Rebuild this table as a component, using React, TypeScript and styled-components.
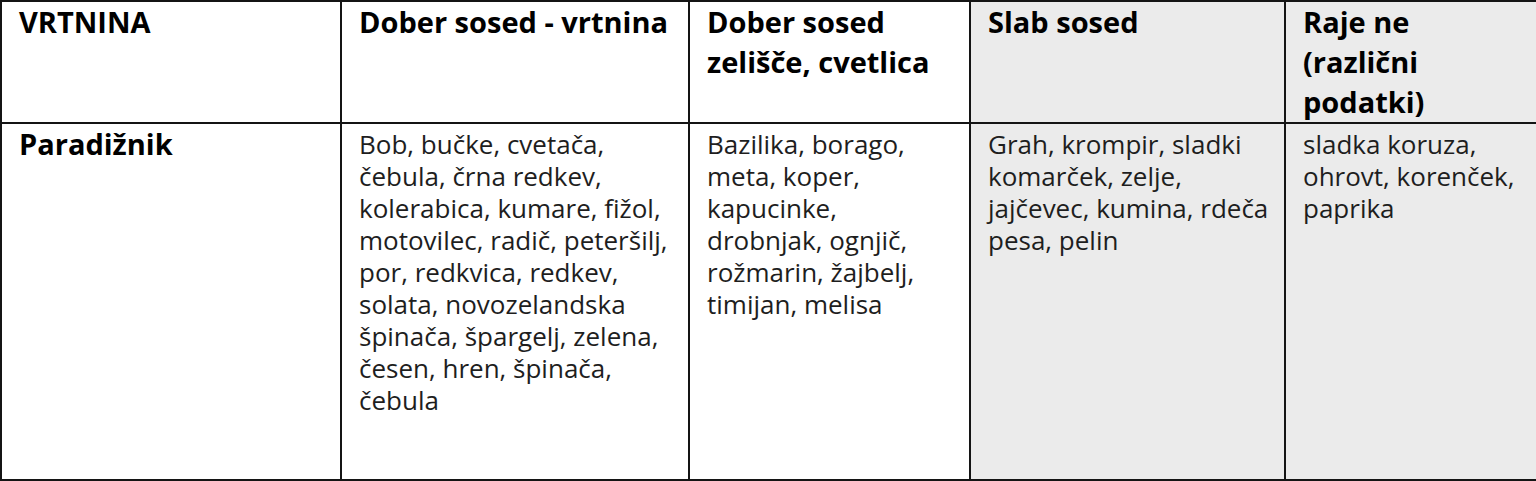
import React from 'react';
import styled, { createGlobalStyle } from 'styled-components';

const GlobalStyle = createGlobalStyle`
  html, body {
    margin: 0;
    padding: 0;
    background: #ffffff;
  }
  body {
    font-family: "Open Sans", "Liberation Sans", sans-serif;
  }
`;

const Table = styled.table`
  width: 1536px;
  height: 481px;
  border-collapse: collapse;
  table-layout: fixed;
  border: 2px solid #141414;
`;

const HeadCell = styled.th<{ shaded?: boolean }>`
  height: 120px;
  box-sizing: border-box;
  padding: 0 8px 0 17px;
  vertical-align: top;
  text-align: left;
  font-size: 29px;
  line-height: 40px;
  font-weight: 700;
  color: #000;
  border: 2px solid #141414;
  background: ${p => (p.shaded ? '#ebebeb' : '#fff')};
`;

const BodyCell = styled.td<{ shaded?: boolean; bold?: boolean }>`
  box-sizing: border-box;
  padding: 4px 8px 0 17px;
  vertical-align: top;
  text-align: left;
  font-size: ${p => (p.bold ? '29px' : '26px')};
  line-height: 32px;
  font-weight: ${p => (p.bold ? 700 : 400)};
  color: ${p => (p.bold ? '#000' : '#1e1e1e')};
  border: 2px solid #141414;
  background: ${p => (p.shaded ? '#ebebeb' : '#fff')};
`;

const Line = styled.span`
  display: block;
  white-space: nowrap;
`;

const columns = [
  { title: ['VRTNINA'], width: 340, shaded: false },
  { title: ['Dober sosed - vrtnina'], width: 348, shaded: false },
  { title: ['Dober sosed', 'zelišče, cvetlica'], width: 281, shaded: false },
  { title: ['Slab sosed'], width: 315, shaded: true },
  { title: ['Raje ne', '(različni', 'podatki)'], width: 252, shaded: true },
];

const row = [
  [
    'Bob, bučke, cvetača,',
    'čebula, črna redkev,',
    'kolerabica, kumare, fižol,',
    'motovilec, radič, peteršilj,',
    'por, redkvica, redkev,',
    'solata, novozelandska',
    'špinača, špargelj, zelena,',
    'česen, hren, špinača,',
    'čebula',
  ],
  [
    'Bazilika, borago,',
    'meta, koper,',
    'kapucinke,',
    'drobnjak, ognjič,',
    'rožmarin, žajbelj,',
    'timijan, melisa',
  ],
  ['Grah, krompir, sladki', 'komarček, zelje,', 'jajčevec, kumina, rdeča', 'pesa, pelin'],
  ['sladka koruza,', 'ohrovt, korenček,', 'paprika'],
];

export default function App() {
  return (
    <>
      <GlobalStyle />
      <Table>
        <colgroup>
          {columns.map((c, i) => (
            <col key={i} style={{ width: c.width }} />
          ))}
        </colgroup>
        <thead>
          <tr>
            {columns.map((c, i) => (
              <HeadCell key={i} shaded={c.shaded}>
                {c.title.map(t => (
                  <Line key={t}>{t}</Line>
                ))}
              </HeadCell>
            ))}
          </tr>
        </thead>
        <tbody>
          <tr>
            <BodyCell bold>Paradižnik</BodyCell>
            {row.map((lines, i) => (
              <BodyCell key={i} shaded={columns[i + 1].shaded}>
                {lines.map(t => (
                  <Line key={t}>{t}</Line>
                ))}
              </BodyCell>
            ))}
          </tr>
        </tbody>
      </Table>
    </>
  );
}
